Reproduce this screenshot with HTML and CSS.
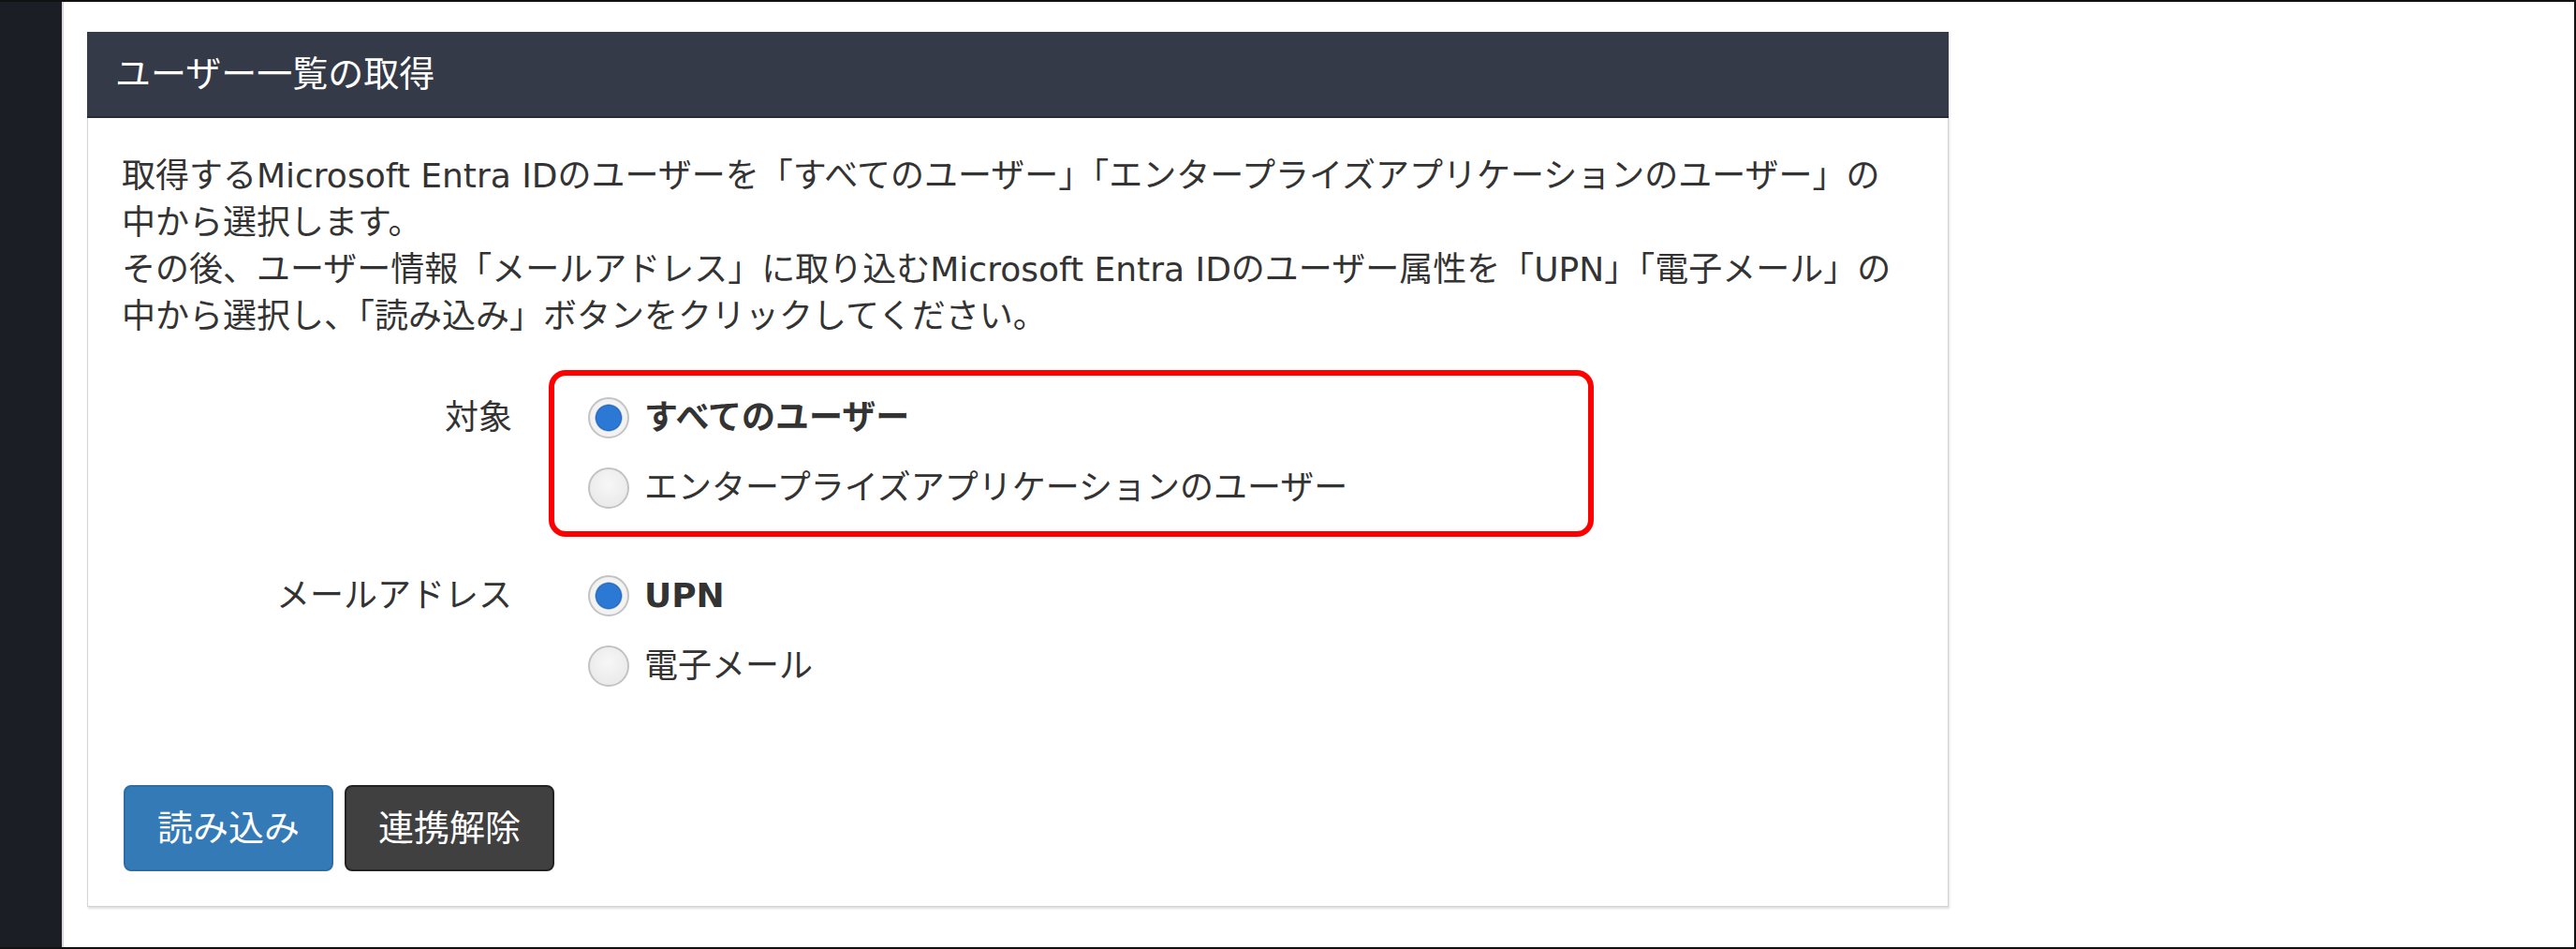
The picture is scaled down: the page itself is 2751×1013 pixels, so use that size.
FILE: index.html
```html
<!DOCTYPE html>
<html lang="ja">
<head>
<meta charset="utf-8">
<title>ユーザー一覧の取得</title>
<link rel="stylesheet" href="styles.css">
</head>
<body>
<div class="frame">
  <aside class="sidebar"></aside>
  <main class="content">
    <section class="panel">
      <div class="panel-heading">ユーザー一覧の取得</div>
      <div class="panel-body">
        <p class="desc">取得するMicrosoft Entra IDのユーザーを「すべてのユーザー」「エンタープライズアプリケーションのユーザー」の<br>中から選択します。<br>その後、ユーザー情報「メールアドレス」に取り込むMicrosoft Entra IDのユーザー属性を「UPN」「電子メール」の<br>中から選択し、「読み込み」ボタンをクリックしてください。</p>

        <div class="form-group group-target">
          <div class="control-label">対象</div>
          <div class="options">
            <label class="opt"><input type="radio" name="target" checked><span class="opt-text bold">すべてのユーザー</span></label>
            <label class="opt"><input type="radio" name="target"><span class="opt-text">エンタープライズアプリケーションのユーザー</span></label>
          </div>
          <div class="highlight"></div>
        </div>

        <div class="form-group group-mail">
          <div class="control-label">メールアドレス</div>
          <div class="options">
            <label class="opt"><input type="radio" name="mail" checked><span class="opt-text bold">UPN</span></label>
            <label class="opt"><input type="radio" name="mail"><span class="opt-text">電子メール</span></label>
          </div>
        </div>

        <div class="actions">
          <button class="btn btn-primary" type="button">読み込み</button>
          <button class="btn btn-dark" type="button">連携解除</button>
        </div>
      </div>
    </section>
  </main>
</div>
</body>
</html>
```
FILE: styles.css
```css
html, body {
  margin: 0;
  padding: 0;
}

body {
  width: 2751px;
  height: 1013px;
  overflow: hidden;
  background: #ffffff;
  font-family: "DejaVu Sans", "Noto Sans CJK JP", sans-serif;
  color: #333333;
}

.frame {
  display: flex;
  height: 1013px;
  box-sizing: border-box;
  border-top: 2px solid #111111;
  border-right: 2px solid #111111;
  border-bottom: 2px solid #111111;
}

.sidebar {
  flex: none;
  width: 66px;
  background: #1b1e25;
  border-right: 2px solid #d9d9d9;
}

.content {
  flex: 1;
  padding: 32px 0 0 25px;
}

.panel {
  width: 1988px;
  box-sizing: border-box;
  border: 1px solid #d4d4d4;
  box-shadow: 1px 2px 2px rgba(0, 0, 0, 0.13);
  background: #ffffff;
}

.panel-heading {
  margin: -1px -1px 0 -1px;
  height: 90px;
  line-height: 90px;
  padding-left: 30px;
  background: #343a48;
  border-bottom: 2px solid #262b36;
  color: #ffffff;
  font-size: 38px;
}

.panel-body {
  padding: 37px 36px 37px 36px;
}

.desc {
  margin: 0;
  font-size: 36px;
  line-height: 50px;
  white-space: nowrap;
}

.form-group {
  position: relative;
  display: grid;
  grid-template-columns: 417px 1fr;
  column-gap: 81px;
  font-size: 36px;
  line-height: 50px;
}

.group-target {
  margin-top: 58px;
}

.group-mail {
  margin-top: 65px;
}

.control-label {
  text-align: right;
  height: 50px;
}

.options {
  display: flex;
  flex-direction: column;
  gap: 25px;
}

.opt {
  display: flex;
  align-items: center;
  gap: 16px;
  height: 50px;
}

.opt input {
  appearance: none;
  -webkit-appearance: none;
  flex: none;
  width: 44px;
  height: 44px;
  margin: 0;
  box-sizing: border-box;
  border-radius: 50%;
  border: 2px solid #c3c3c3;
  background: radial-gradient(circle at 50% 40%, #f7f7f7 0%, #e6e6e6 100%);
}

.opt input:checked {
  background: radial-gradient(circle, #2c79d5 0 12.5px, #2466b9 13.5px, #f4f4f4 15px, #ebebeb 100%);
}

.opt-text.bold {
  font-weight: bold;
}

.highlight {
  position: absolute;
  left: 456px;
  top: -26px;
  width: 1116px;
  height: 178px;
  box-sizing: border-box;
  border: 6px solid #ff0000;
  border-radius: 18px;
  pointer-events: none;
}

.actions {
  margin-top: 102px;
  margin-left: 2px;
  display: flex;
  gap: 12px;
}

.btn {
  height: 92px;
  box-sizing: border-box;
  padding: 0 34px;
  border-radius: 8px;
  border: 2px solid transparent;
  font-family: inherit;
  font-size: 38px;
  line-height: 50px;
  color: #ffffff;
}

.btn-primary {
  background: #337ab7;
  border-color: #2e6da4;
}

.btn-dark {
  background: #404040;
  border-color: #222222;
}
```
